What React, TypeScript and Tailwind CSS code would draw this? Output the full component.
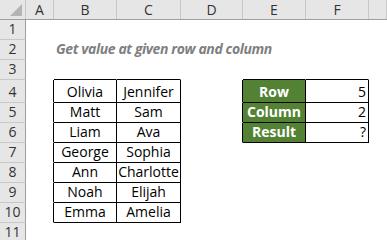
import React from 'react';

const colW = ['w-[26px]', 'w-[28px]', 'w-[63px]', 'w-[64px]', 'w-[62px]', 'w-[63px]', 'w-[63px]', 'flex-1'];
const letters = ['A', 'B', 'C', 'D', 'E', 'F', 'G'];

const names: [string, string][] = [
  ['Olivia', 'Jennifer'],
  ['Matt', 'Sam'],
  ['Liam', 'Ava'],
  ['George', 'Sophia'],
  ['Ann', 'Charlotte'],
  ['Noah', 'Elijah'],
  ['Emma', 'Amelia'],
];

const lookup: Record<number, [string, string]> = {
  4: ['Row', '5'],
  5: ['Column', '2'],
  6: ['Result', '?'],
};

// c: 0 = A ... 6 = G
function rightBlack(r: number, c: number) {
  if (r >= 4 && r <= 10 && c <= 2) return true;
  if (r >= 4 && r <= 6 && c >= 3 && c <= 5) return true;
  return false;
}

function bottomBlack(r: number, c: number) {
  if (r >= 3 && r <= 10 && (c === 1 || c === 2)) return true;
  if (r >= 3 && r <= 6 && (c === 4 || c === 5)) return true;
  return false;
}

function cellContent(r: number, c: number): React.ReactNode {
  if (r === 2 && c === 1) {
    return (
      <span className="absolute z-10 left-[2px] bottom-[1px] whitespace-nowrap font-bold italic text-[#7f7f7f] text-[14px] leading-[18px] tracking-[-0.4px]">
        Get value at given row and column
      </span>
    );
  }
  if (r >= 4 && r <= 10 && (c === 1 || c === 2)) {
    return <span className="w-full text-center">{names[r - 4][c - 1]}</span>;
  }
  if (lookup[r] && c === 4) {
    return <span className="w-full text-center font-bold text-white">{lookup[r][0]}</span>;
  }
  if (lookup[r] && c === 5) {
    return <span className="w-full text-right pr-[2px]">{lookup[r][1]}</span>;
  }
  return null;
}

function SheetRow({ r }: { r: number }) {
  const h = r === 4 ? 'h-[23px]' : 'h-[20px]';
  return (
    <div className={`flex ${h}`}>
      <div className={`${colW[0]} shrink-0 flex items-end justify-center pb-[1px] bg-[#e6e6e6] border-r border-r-[#9f9f9f] border-b border-b-[#c8c8c8] text-[#333] leading-[18px]`}>
        {r}
      </div>
      {letters.map((_, c) => {
        const green = c === 4 && lookup[r];
        return (
          <div
            key={c}
            className={`${colW[c + 1]} shrink-0 relative flex items-end pb-[1px] leading-[18px] border-r border-b ${
              rightBlack(r, c) ? 'border-r-black' : 'border-r-transparent'
            } ${bottomBlack(r, c) ? 'border-b-black' : 'border-b-transparent'} ${green ? 'bg-[#548235]' : 'bg-white'}`}
          >
            {cellContent(r, c)}
          </div>
        );
      })}
    </div>
  );
}

export default function App() {
  const rows = [1, 2, 3, 4, 5, 6, 7, 8, 9, 10, 11];
  return (
    <div className="w-[387px] h-[240px] overflow-hidden bg-white text-black text-[14px] font-['Open_Sans',sans-serif]">
      <div className="flex h-[20px] bg-[#e6e6e6] border-b border-b-[#9f9f9f] text-[#333]">
        <div className={`${colW[0]} shrink-0 relative border-r border-r-[#c8c8c8]`}>
          <svg className="absolute right-[3px] bottom-[3px]" width="12" height="12" viewBox="0 0 12 12">
            <polygon points="12,0 12,12 0,12" fill="#b4b4b4" />
          </svg>
        </div>
        {letters.map((l, i) => (
          <div
            key={l}
            className={`${colW[i + 1]} shrink-0 flex items-center justify-center border-r border-r-[#c8c8c8] leading-none`}
          >
            {l === 'G' ? null : l}
          </div>
        ))}
      </div>
      {rows.map((r) => (
        <SheetRow key={r} r={r} />
      ))}
    </div>
  );
}
